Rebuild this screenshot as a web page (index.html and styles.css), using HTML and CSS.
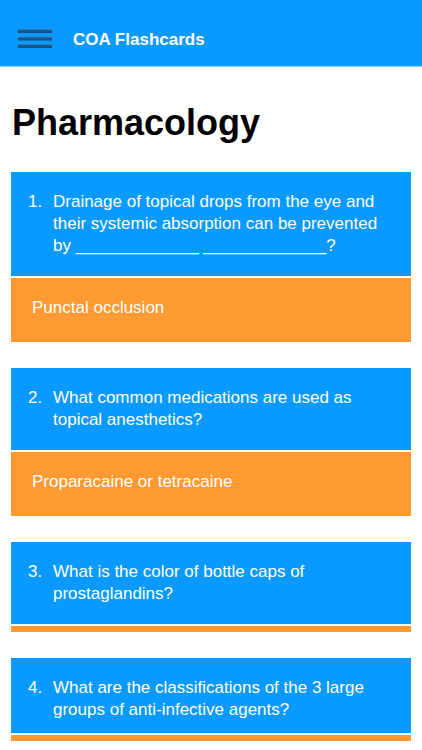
FILE: index.html
```html
<!DOCTYPE html>
<html lang="en">
<head>
    <meta charset="UTF-8">
    <meta name="viewport" content="width=device-width, initial-scale=1.0">
    <title>COA Flashcards</title>
    <link rel="stylesheet" href="styles.css">
</head>
<body>
    <header class="topbar">
        <svg class="menu-icon" width="34" height="19" viewBox="0 0 34 19">
            <defs>
                <linearGradient id="barShade" x1="0" y1="0" x2="0" y2="1">
                    <stop offset="0" stop-color="#3f86bf"/>
                    <stop offset="0.4" stop-color="#15598f"/>
                    <stop offset="1" stop-color="#0f4f82"/>
                </linearGradient>
            </defs>
            <rect x="0" y="0" width="34" height="4" fill="url(#barShade)"/>
            <rect x="0" y="7.5" width="34" height="4" fill="url(#barShade)"/>
            <rect x="0" y="15" width="34" height="4" fill="url(#barShade)"/>
        </svg>
        <span class="app-title">COA Flashcards</span>
    </header>

    <main class="content">
        <h1>Pharmacology</h1>

        <div class="card">
            <div class="question">
                <span class="num">1.</span>
                <span class="text">Drainage of topical drops from the eye and their systemic absorption can be prevented by _____________ _____________?</span>
            </div>
            <div class="answer">Punctal occlusion</div>
        </div>

        <div class="card">
            <div class="question">
                <span class="num">2.</span>
                <span class="text">What common medications are used as topical anesthetics?</span>
            </div>
            <div class="answer">Proparacaine or tetracaine</div>
        </div>

        <div class="card">
            <div class="question">
                <span class="num">3.</span>
                <span class="text">What is the color of bottle caps of prostaglandins?</span>
            </div>
            <div class="answer empty"></div>
        </div>

        <div class="card last">
            <div class="question">
                <span class="num">4.</span>
                <span class="text">What are the classifications of the 3 large groups of anti-infective agents?</span>
            </div>
            <div class="answer empty"></div>
        </div>
    </main>
</body>
</html>
```

FILE: styles.css
```css
body {
    font-family: "Liberation Sans", Arial, Helvetica, sans-serif;
    background-color: #fff;
    color: #000;
    margin: 0;
    padding: 0;
}

/* Top Bar */
.topbar {
    display: flex;
    align-items: center;
    gap: 21px;
    height: 52px;
    padding: 14px 18px 0;
    background-color: #0a99ff;
    border-bottom: 1px solid #8ecbff;
}

.menu-icon {
    margin-top: -3px;
}

.app-title {
    color: #fff;
    font-size: 17px;
    font-weight: bold;
    line-height: 20px;
}

/* Content */
.content {
    padding: 0 11px;
}

h1 {
    font-size: 36px;
    line-height: 40px;
    font-weight: bold;
    margin: 36px 0 29px 1px;
}

/* Cards */
.card {
    display: flex;
    flex-direction: column;
    gap: 2px;
    margin-bottom: 26px;
}

.question {
    display: flex;
    background-color: #0a99ff;
    color: #fff;
    font-size: 17px;
    line-height: 22px;
    padding: 19px 12px 19px 17px;
}

.num {
    flex: 0 0 25px;
}

.answer {
    background-color: #ff9a33;
    color: #fff;
    font-size: 17px;
    line-height: 22px;
    padding: 19px 21px 23px;
}

.answer.empty {
    padding: 0;
    height: 6px;
}

.last .question {
    padding-bottom: 12px;
}
```
